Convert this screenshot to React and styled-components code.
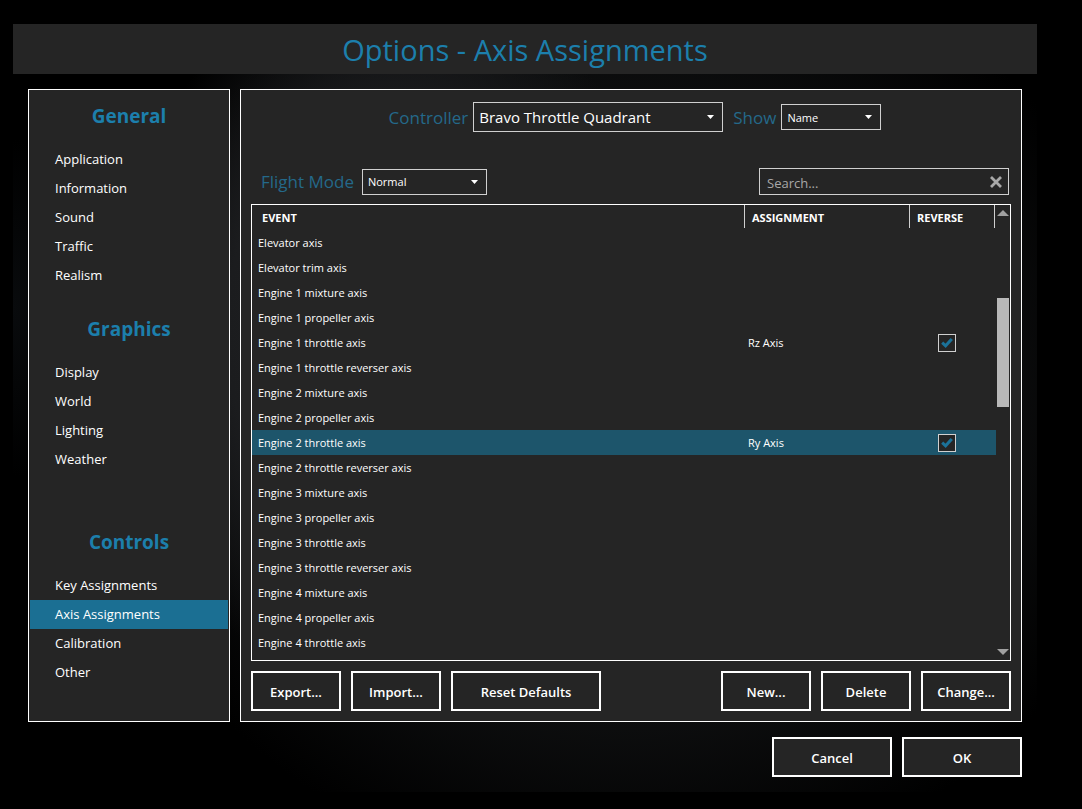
import React, { useState } from "react";
import styled, { createGlobalStyle } from "styled-components";

const GlobalStyle = createGlobalStyle`
  * {
    box-sizing: border-box;
  }
  body {
    margin: 0;
    background-color: #000;
    color: #fff;
    font-family: "Open Sans", "Noto Sans", sans-serif;
  }
  button, input, select {
    font-family: inherit;
    color: inherit;
  }
`;

const Page = styled.div`
  min-height: 100vh;
  padding: 24px 45px 16px 13px;
`;

const Window = styled.div`
  background:
    radial-gradient(ellipse 8% 22% at 0% 37%, #090b0d 0%, transparent 100%),
    radial-gradient(ellipse 27% 48% at 37% 40%, #222325 0%, #1b1c1e 60%, transparent 100%),
    radial-gradient(ellipse 52% 62% at 60% 50%, #141516 0%, #0f1011 60%, #000 100%);
`;

const Title = styled.h1`
  margin: 0;
  height: 50px;
  line-height: 52px;
  background-color: #252525;
  color: #1c7fac;
  font-size: 29px;
  font-weight: 400;
  text-align: center;
`;

const Content = styled.div`
  padding: 15px;
`;

const Columns = styled.div`
  display: grid;
  grid-template-columns: 202px 1fr;
  gap: 10px;
`;

const Sidebar = styled.nav`
  padding: 1px;
  border: 1px solid #fff;
  background-color: #252525;
`;

const Section = styled.section`
  min-height: 213px;

  &:last-child {
    min-height: 0;
  }
`;

const SectionTitle = styled.h2`
  margin: 0;
  height: 54px;
  line-height: 50px;
  color: #1c7fac;
  font-size: 19px;
  font-weight: 700;
  text-align: center;
`;

const MenuLink = styled.a`
  display: block;
  padding-left: 25px;
  line-height: 29px;
  font-size: 13px;
  color: #fff;
  text-decoration: none;
  background-color: ${(props) => (props.$active ? "#1b6f93" : "transparent")};
`;

const Main = styled.main`
  padding: 12px 10px 10px;
  border: 1px solid #fff;
  background-color: #252525;
`;

const ControllerBar = styled.div`
  display: flex;
  justify-content: center;
  align-items: center;
  gap: 10px;
  padding-left: 8px;
`;

const FilterBar = styled.div`
  display: flex;
  justify-content: space-between;
  align-items: center;
  margin-top: 36px;
  padding: 0 2px 0 10px;
`;

const Field = styled.div`
  display: flex;
  align-items: center;
  gap: ${(props) => props.$gap || "5px"};
`;

const Label = styled.label`
  color: #24698a;
  font-size: 17px;
`;

const SelectBox = styled.div`
  display: grid;
  align-items: center;
  width: ${(props) => props.$width};

  svg {
    grid-area: 1 / 1;
    justify-self: end;
    margin-right: 9px;
    pointer-events: none;
  }
`;

const StyledSelect = styled.select`
  grid-area: 1 / 1;
  appearance: none;
  width: 100%;
  height: ${(props) => (props.$large ? "30px" : "26px")};
  padding: 0 5px;
  border: 1px solid #d0d0d0;
  border-radius: 0;
  background-color: #252525;
  font-size: ${(props) => (props.$large ? "15px" : "11px")};
`;

const SearchBox = styled.div`
  display: flex;
  align-items: center;
  width: 250px;
  height: 27px;
  border: 1px solid #d0d0d0;
`;

const SearchInput = styled.input`
  flex: 1;
  min-width: 0;
  height: 25px;
  padding: 2px 7px 0;
  border: 0;
  outline: 0;
  background: transparent;
  font-size: 13px;

  &::placeholder {
    color: #a8a8a8;
    opacity: 1;
  }
`;

const ClearButton = styled.button`
  display: flex;
  padding: 0 6px;
  border: 0;
  background: transparent;
`;

const Grid = styled.div`
  display: flex;
  margin-top: 9px;
  border: 1px solid #fff;
`;

const Table = styled.table`
  flex: 1;
  margin-bottom: 5px;
  border-collapse: collapse;
  table-layout: fixed;
  font-size: 11px;
`;

const HeadCell = styled.th`
  width: ${(props) => props.$width};
  height: 25px;
  padding: 0;
  text-align: left;
  vertical-align: top;
  font-weight: 700;

  span {
    display: block;
    height: 23px;
    line-height: 25px;
    padding-left: 7px;
    border-left: 1px solid #d0d0d0;
  }
  &:first-child span {
    padding-left: 10px;
    border-left: 0;
  }
  &:last-child span {
    margin-right: 1px;
    border-right: 1px solid #d0d0d0;
  }
`;

const Row = styled.tr`
  background-color: ${(props) => (props.$selected ? "#1d556b" : "transparent")};
`;

const Cell = styled.td`
  height: 25px;
  padding: 0 0 0 4px;

  &:first-child {
    padding-left: 6px;
  }
`;

const CheckCell = styled(Cell)`
  padding-left: 29px;
`;

const CheckLabel = styled.label`
  display: grid;
  width: 18px;
  height: 18px;

  svg {
    grid-area: 1 / 1;
    place-self: center;
    pointer-events: none;
  }
`;

const Checkbox = styled.input`
  grid-area: 1 / 1;
  appearance: none;
  width: 18px;
  height: 18px;
  margin: 0;
  border: 1px solid #d0d0d0;
  background-color: #252525;
`;

const Scrollbar = styled.div`
  display: flex;
  flex-direction: column;
  width: 14px;
  padding: 2px 1px;
`;

const ScrollButton = styled.button`
  display: flex;
  justify-content: center;
  align-items: center;
  height: 12px;
  padding: 0;
  border: 0;
  background: transparent;
`;

const Space = styled.div`
  flex: ${(props) => props.$grow} 0 0;
`;

const Thumb = styled(Space)`
  background-color: #b9b9b9;
`;

const Actions = styled.div`
  display: flex;
  justify-content: space-between;
  margin-top: 10px;
`;

const ButtonGroup = styled.div`
  display: flex;
  gap: 10px;
`;

const Button = styled.button`
  width: ${(props) => props.$width || "90px"};
  height: 40px;
  padding: 2px 0 0;
  border: 2px solid #fff;
  background-color: #252525;
  font-size: 13px;
  font-weight: 600;
`;

const Footer = styled.footer`
  display: flex;
  justify-content: flex-end;
  gap: 10px;
  margin-top: 15px;
`;

const sections = [
  {
    title: "General",
    items: ["Application", "Information", "Sound", "Traffic", "Realism"],
  },
  {
    title: "Graphics",
    items: ["Display", "World", "Lighting", "Weather"],
  },
  {
    title: "Controls",
    items: ["Key Assignments", "Axis Assignments", "Calibration", "Other"],
  },
];

const events = [
  { name: "Elevator axis" },
  { name: "Elevator trim axis" },
  { name: "Engine 1 mixture axis" },
  { name: "Engine 1 propeller axis" },
  { name: "Engine 1 throttle axis", assignment: "Rz Axis" },
  { name: "Engine 1 throttle reverser axis" },
  { name: "Engine 2 mixture axis" },
  { name: "Engine 2 propeller axis" },
  { name: "Engine 2 throttle axis", assignment: "Ry Axis" },
  { name: "Engine 2 throttle reverser axis" },
  { name: "Engine 3 mixture axis" },
  { name: "Engine 3 propeller axis" },
  { name: "Engine 3 throttle axis" },
  { name: "Engine 3 throttle reverser axis" },
  { name: "Engine 4 mixture axis" },
  { name: "Engine 4 propeller axis" },
  { name: "Engine 4 throttle axis" },
];

const Select = ({ id, width, large, options }) => (
  <SelectBox $width={width}>
    <StyledSelect id={id} $large={large}>
      {options.map((option) => (
        <option key={option}>{option}</option>
      ))}
    </StyledSelect>
    <svg viewBox="0 0 7 4" width={7} height={4}>
      <path fill="#fff" d="M0,0H7L3.5,4Z" />
    </svg>
  </SelectBox>
);

const ReverseCheckbox = ({ name }) => {
  const [checked, setChecked] = useState(true);
  return (
    <CheckLabel>
      <Checkbox
        type="checkbox"
        aria-label={`Reverse ${name}`}
        checked={checked}
        onChange={() => setChecked(!checked)}
      />
      {checked && (
        <svg viewBox="0 0 12 10" width={12} height={10}>
          <path
            fill="none"
            stroke="#1b7299"
            strokeWidth="3"
            d="M1.2,4.6L4.6,7.8L10.8,1"
          />
        </svg>
      )}
    </CheckLabel>
  );
};

const App = () => {
  const [page, setPage] = useState("Axis Assignments");
  const [selected, setSelected] = useState("Engine 2 throttle axis");
  const [search, setSearch] = useState("");

  return (
    <Page>
      <GlobalStyle />
      <Window>
        <Title>Options - {page}</Title>
        <Content>
          <Columns>
            <Sidebar>
              {sections.map((section) => (
                <Section key={section.title}>
                  <SectionTitle>{section.title}</SectionTitle>
                  {section.items.map((item) => (
                    <MenuLink
                      key={item}
                      href="#"
                      $active={item === page}
                      onClick={() => setPage(item)}
                    >
                      {item}
                    </MenuLink>
                  ))}
                </Section>
              ))}
            </Sidebar>
            <Main>
              <ControllerBar>
                <Field>
                  <Label htmlFor="controller">Controller</Label>
                  <Select
                    id="controller"
                    width="250px"
                    large
                    options={["Bravo Throttle Quadrant"]}
                  />
                </Field>
                <Field>
                  <Label htmlFor="show">Show</Label>
                  <Select id="show" width="100px" options={["Name"]} />
                </Field>
              </ControllerBar>
              <FilterBar>
                <Field $gap="8px">
                  <Label htmlFor="mode">Flight Mode</Label>
                  <Select id="mode" width="125px" options={["Normal"]} />
                </Field>
                <SearchBox>
                  <SearchInput
                    aria-label="Search"
                    placeholder="Search..."
                    value={search}
                    onChange={(e) => setSearch(e.target.value)}
                  />
                  <ClearButton aria-label="Clear" onClick={() => setSearch("")}>
                    <svg viewBox="0 0 12 12" width={12} height={12}>
                      <path
                        stroke="#a8a8a8"
                        strokeWidth="2.8"
                        d="M1,1L11,11M11,1L1,11"
                      />
                    </svg>
                  </ClearButton>
                </SearchBox>
              </FilterBar>
              <Grid>
                <Table>
                  <thead>
                    <tr>
                      <HeadCell>
                        <span>EVENT</span>
                      </HeadCell>
                      <HeadCell $width="165px">
                        <span>ASSIGNMENT</span>
                      </HeadCell>
                      <HeadCell $width="87px">
                        <span>REVERSE</span>
                      </HeadCell>
                    </tr>
                  </thead>
                  <tbody>
                    {events.map(({ name, assignment }) => (
                      <Row
                        key={name}
                        $selected={name === selected}
                        onClick={() => setSelected(name)}
                      >
                        <Cell>{name}</Cell>
                        <Cell>{assignment}</Cell>
                        <CheckCell>
                          {assignment && <ReverseCheckbox name={name} />}
                        </CheckCell>
                      </Row>
                    ))}
                  </tbody>
                </Table>
                <Scrollbar>
                  <ScrollButton aria-label="Scroll up">
                    <svg viewBox="0 0 12 6" width={12} height={6}>
                      <path fill="#a0a0a0" d="M0,6L6,0L12,6Z" />
                    </svg>
                  </ScrollButton>
                  <Space $grow={79} />
                  <Thumb $grow={109} />
                  <Space $grow={239} />
                  <ScrollButton aria-label="Scroll down">
                    <svg viewBox="0 0 12 6" width={12} height={6}>
                      <path fill="#a0a0a0" d="M0,0H12L6,6Z" />
                    </svg>
                  </ScrollButton>
                </Scrollbar>
              </Grid>
              <Actions>
                <ButtonGroup>
                  <Button>Export...</Button>
                  <Button>Import...</Button>
                  <Button $width="150px">Reset Defaults</Button>
                </ButtonGroup>
                <ButtonGroup>
                  <Button>New...</Button>
                  <Button>Delete</Button>
                  <Button>Change...</Button>
                </ButtonGroup>
              </Actions>
            </Main>
          </Columns>
          <Footer>
            <Button $width="120px">Cancel</Button>
            <Button $width="120px">OK</Button>
          </Footer>
        </Content>
      </Window>
    </Page>
  );
};

export default App;
